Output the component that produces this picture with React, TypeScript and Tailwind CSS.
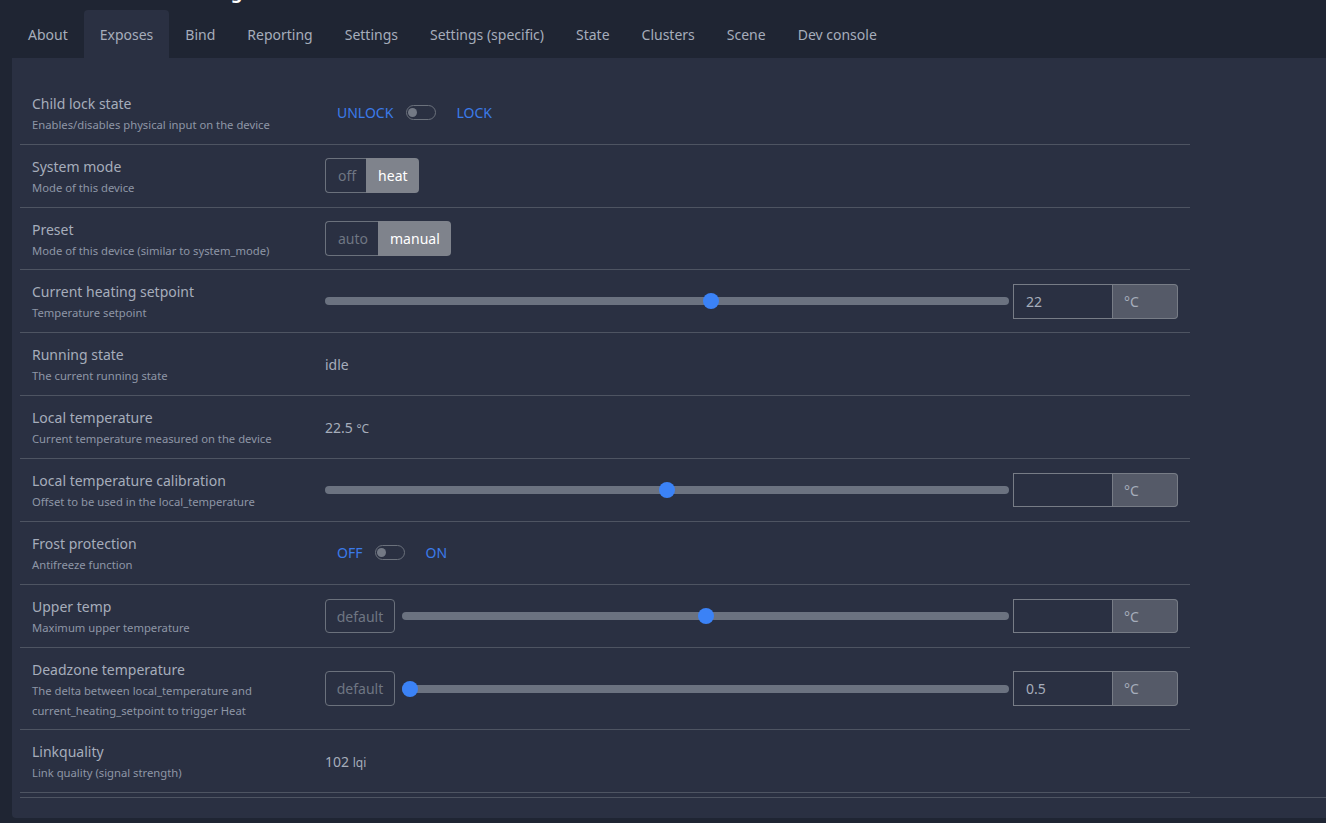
import React from "react";

const tabs = ["About", "Exposes", "Bind", "Reporting", "Settings", "Settings (specific)", "State", "Clusters", "Scene", "Dev console"];

function Label({ title, sub }: { title: string; sub: React.ReactNode }) {
  return (
    <div className="w-[305px] shrink-0 pl-3 pt-[2px]">
      <div className="text-[14px] leading-[22px] text-[#a6adbb]">{title}</div>
      <div className="text-[11.25px] leading-5 text-[#8e96a6]">{sub}</div>
    </div>
  );
}

function Toggle({ off, on }: { off: string; on: string }) {
  return (
    <div className="-mt-[2px] flex items-center pl-3 text-[14px] text-[#3b7bea]">
      <span>{off}</span>
      <span className="relative ml-[13px] mr-3 h-[15px] w-[30px] rounded-full border border-[#6b717c]">
        <span className="absolute left-[1px] top-[2px] h-[9px] w-[9px] rounded-full bg-[#737985]" />
      </span>
      <span className="ml-2">{on}</span>
    </div>
  );
}

function Segment({ off, on }: { off: string; on: string }) {
  return (
    <div className="flex h-[35px] items-stretch text-[14px]">
      <span className="flex items-center rounded-l-[4px] border border-r-0 border-[#6b717c] pl-3 pr-[10px] text-[#6f7683]">{off}</span>
      <span className="flex items-center rounded-r-[4px] bg-[#7f838c] pl-3 pr-[11px] text-white">{on}</span>
    </div>
  );
}

function Unit({ value }: { value?: string }) {
  return (
    <div className={`ml-[4px] flex w-[165px] shrink-0 text-[14px] text-[#a6adbb] ${value ? "h-[35px]" : "h-[34px]"}`}>
      <span className="flex w-[100px] items-center border border-[#777c86] pl-3">{value}</span>
      <span className="flex flex-1 items-center rounded-r-[4px] border border-l-0 border-[#777c86] bg-[#555a68] pl-[11px]">°C</span>
    </div>
  );
}

function Slider({ pos }: { pos: string }) {
  return (
    <div className="relative h-2 flex-1 rounded-full bg-[#6b7280]">
      <span className={`absolute top-1/2 h-4 w-4 -translate-x-1/2 -translate-y-1/2 rounded-full bg-[#3b82f6] ${pos}`} />
    </div>
  );
}

function DefaultBtn({ tall }: { tall?: boolean }) {
  return (
    <span className={`mr-[7px] flex w-[70px] shrink-0 items-center justify-center rounded-[4px] border border-[#6b717c] text-[14px] text-[#6f7683] ${tall ? "h-[35px]" : "h-[34px]"}`}>
      default
    </span>
  );
}

function Row({ children, h = "h-[63px]" }: { children: React.ReactNode; h?: string }) {
  return <div className={`flex items-center border-b border-[#4e5462] ${h}`}>{children}</div>;
}

function Value({ v, unit }: { v: string; unit?: string }) {
  return (
    <div className="text-[14px] text-[#a6adbb]">
      {v} {unit && <span className="text-[12px]">{unit}</span>}
    </div>
  );
}

export default function App() {
  return (
    <div className="h-[823px] w-[1326px] overflow-hidden bg-[#1f2533] font-['Noto_Sans',sans-serif]">
      <div className="h-[10px] overflow-hidden pl-[231px]">
        <div className="-mt-[18px] text-[18px] font-bold leading-5 text-white">g</div>
      </div>
      <div className="flex h-12 items-stretch pl-3 text-[14px] text-[#a6adbb]">
        {tabs.map((t) => (
          <div key={t} className={`flex items-center rounded-t-[4px] px-4 ${t === "Exposes" ? "bg-[#2a3042]" : ""}`}>
            {t}
          </div>
        ))}
      </div>
      <div className="ml-3 h-[760px] rounded-bl-[4px] bg-[#2a3042] pl-2 pt-6">
        <div className="w-[1170px]">
          <Row>
            <Label title="Child lock state" sub="Enables/disables physical input on the device" />
            <Toggle off="UNLOCK" on="LOCK" />
          </Row>
          <Row>
            <Label title="System mode" sub="Mode of this device" />
            <div className="mb-[2px]">
              <Segment off="off" on="heat" />
            </div>
          </Row>
          <Row h="h-[62px]">
            <Label title="Preset" sub="Mode of this device (similar to system_mode)" />
            <Segment off="auto" on="manual" />
          </Row>
          <Row>
            <Label title="Current heating setpoint" sub="Temperature setpoint" />
            <div className="flex flex-1 items-center pr-3">
              <Slider pos="left-[56.4%]" />
              <Unit value="22" />
            </div>
          </Row>
          <Row>
            <Label title="Running state" sub="The current running state" />
            <Value v="idle" />
          </Row>
          <Row>
            <Label title="Local temperature" sub="Current temperature measured on the device" />
            <Value v="22.5" unit="°C" />
          </Row>
          <Row>
            <Label title="Local temperature calibration" sub="Offset to be used in the local_temperature" />
            <div className="flex flex-1 items-center pr-3">
              <Slider pos="left-[50%]" />
              <Unit />
            </div>
          </Row>
          <Row>
            <Label title="Frost protection" sub="Antifreeze function" />
            <Toggle off="OFF" on="ON" />
          </Row>
          <Row>
            <Label title="Upper temp" sub="Maximum upper temperature" />
            <div className="flex flex-1 items-center pr-3">
              <DefaultBtn />
              <Slider pos="left-[50%]" />
              <Unit />
            </div>
          </Row>
          <Row h="h-[82px]">
            <Label title="Deadzone temperature" sub={<>The delta between local_temperature and<br />current_heating_setpoint to trigger Heat</>} />
            <div className="flex flex-1 items-center pr-3">
              <DefaultBtn tall />
              <Slider pos="left-[8px]" />
              <Unit value="0.5" />
            </div>
          </Row>
          <Row>
            <Label title="Linkquality" sub="Link quality (signal strength)" />
            <Value v="102" unit="lqi" />
          </Row>
        </div>
        <div className="mt-1 border-t border-[#4e5462]" />
      </div>
    </div>
  );
}
